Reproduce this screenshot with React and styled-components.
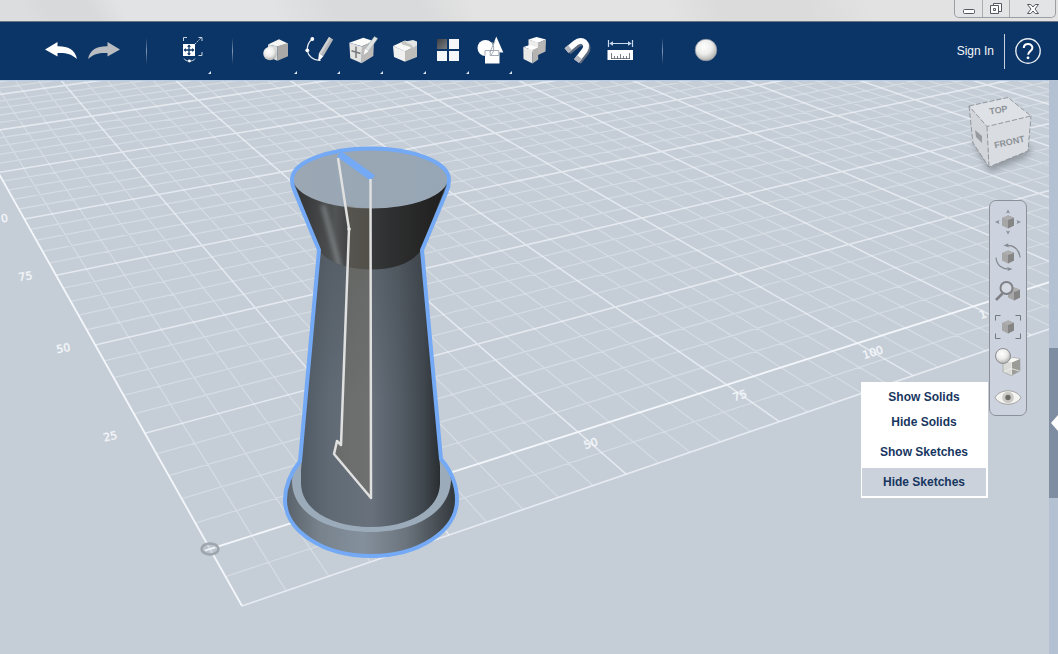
import React from "react";
import styled, { createGlobalStyle, css } from "styled-components";

const GlobalStyle = createGlobalStyle`
  *, *::before, *::after { box-sizing: border-box; }
  body {
    margin: 0;
    background: #c5cdd6;
    font-family: "Liberation Sans", Arial, sans-serif;
    font-size: 12px;
  }
  button { font: inherit; }
`;

const App = styled.div`
  display: flex;
  flex-direction: column;
  min-height: 100vh;
`;

/* ---------- window frame ---------- */

const TitleBar = styled.header`
  display: flex;
  justify-content: flex-end;
  height: 22px;
  padding-right: 2px;
  border-bottom: 1px solid #6b7480;
  background: linear-gradient(62deg, #dcddde 0 3%, #d8d9da 5% 9%, #e2e3e4 12% 26%, #d9dadb 32% 40%, #e3e3e3 45% 63%, #dbdbdc 68% 76%, #e2e2e3 82%);
`;

const WindowControls = styled.div`
  display: flex;
  height: 18px;
  border: 1px solid #9b9ea3;
  border-top: 0;
  border-radius: 0 0 5px 5px;
  background: #e3e4e6;
`;

const WindowButton = styled.button`
  display: flex;
  align-items: center;
  justify-content: center;
  width: ${(p) => (p.$wide ? 46 : 27)}px;
  padding: 0;
  border: 0;
  background: none;

  & + & { border-left: 1px solid #a9acb0; }
`;

/* ---------- main toolbar ---------- */

const Toolbar = styled.nav`
  display: flex;
  align-items: stretch;
  height: 58px;
  padding: 0 17px 0 40px;
  background: #0c3567;
`;

const ToolButton = styled.button`
  position: relative;
  width: 43px;
  padding: 0;
  border: 0;
  background: none;
  cursor: pointer;

  svg { display: block; }

  ${(p) =>
    p.$flyout &&
    css`
      &::after {
        content: "";
        position: absolute;
        right: 1px;
        bottom: 6px;
        border-left: 3px solid transparent;
        border-bottom: 3px solid #dfe6f0;
      }
    `}
`;

const ToolDivider = styled.div`
  width: 1px;
  height: 26px;
  margin: auto 22px auto 20px;
  background: linear-gradient(#0c3567, #8196b3 50%, #0c3567);
`;

const Account = styled.div`
  display: flex;
  align-items: center;
  margin-left: auto;
`;

const SignIn = styled.a`
  padding-right: 10px;
  color: #f2f5fa;
  font-size: 12px;
  line-height: 35px;
  text-decoration: none;
  border-right: 1px solid #c6d2e2;
`;

const HelpButton = styled.button`
  width: 26px;
  height: 26px;
  margin-left: 10px;
  padding: 0;
  border: 0;
  background: none;
  svg { display: block; }
`;

/* ---------- workspace ---------- */

const Workspace = styled.main`
  display: flex;
  flex: 1;
`;

const Viewport = styled.section`
  position: relative;
  flex: 1;
  min-width: 0;
  overflow: hidden;
  background: #c5cdd6;
`;

const SceneDrawing = styled.svg`
  position: absolute;
  inset: 0;
  width: 100%;
  height: 100%;
`;

const ViewCube = styled.button`
  position: absolute;
  top: 8px;
  right: 8px;
  width: 80px;
  height: 88px;
  padding: 0;
  border: 0;
  background: none;
  svg { display: block; }
`;

const NavPanel = styled.div`
  position: absolute;
  top: 120px;
  right: 22px;
  display: flex;
  flex-direction: column;
  padding: 3px 0 1px;
  border: 1px solid #8c9098;
  border-radius: 7px;
  background: #ccd2de;
`;

const NavButton = styled.button`
  width: 36px;
  height: 35px;
  padding: 0;
  border: 0;
  background: none;
  svg { display: block; }
`;

const Menu = styled.div`
  position: absolute;
  top: 302px;
  right: 61px;
  display: flex;
  flex-direction: column;
  width: 127px;
  padding: 2px 2px 2px 1px;
  background: #fff;
`;

const MenuItem = styled.button`
  height: ${(p) => (p.$dense ? 25 : 28)}px;
  margin-top: ${(p) => (p.$dense ? 0 : 2)}px;
  padding: 0;
  border: 0;
  background: ${(p) => (p.$active ? "#ccd2dc" : "none")};
  color: #17365f;
  font-size: 12px;
  font-weight: bold;
  text-align: center;
`;

const MenuGap = styled.div`
  height: 2px;
`;

const Rail = styled.aside`
  width: 9px;
  background: #b3c1d3;
`;

const RailHandle = styled.button`
  display: flex;
  align-items: center;
  justify-content: flex-end;
  width: 100%;
  height: 150px;
  margin-top: 268px;
  padding: 0;
  border: 0;
  background: #7e8da1;
`;

/* ---------- toolbar icons ---------- */

const ToolIcon = ({ children }) => (
  <svg width="43" height="58" viewBox="0 0 43 58" aria-hidden="true">
    {children}
  </svg>
);

const UndoIcon = () => (
  <ToolIcon>
    <path d="M5 27.500 17.500 20v4.300C27 24 35 27 37 37c-6-5.500-12-6.500-19.500-6v3.500Z" fill="#fff" />
  </ToolIcon>
);

const RedoIcon = () => (
  <ToolIcon>
    <path d="M37 27.500 24.500 20v4.300C15 24 7 27 5 37c6-5.500 12-6.500 19.500-6v3.500Z" fill="#b9bcc1" />
  </ToolIcon>
);

const TransformIcon = () => (
  <ToolIcon>
    <rect x="14" y="22" width="12" height="12" fill="#fff" />
    <path d="M20 23.500v9M15.500 28h9" stroke="#0c3567" strokeWidth="1.300" />
    <path d="m20 22.600 2 2.200h-4Zm0 10.800 2-2.200h-4ZM14.600 28l2.200-2v4Zm10.800 0-2.200-2v4Z" fill="#0c3567" />
    <path d="M14.500 19v-3.500H18M29.500 15.500h3.500V19M33 30v3.500h-3.500" fill="none" stroke="#c9d3e1" />
    <path d="m26 22 6-6" stroke="#c9d3e1" strokeDasharray="1.500 1" />
    <path d="M15 36.500c1.500 3.500 9.500 3.500 11 0" fill="none" stroke="#c9d3e1" />
    <circle cx="20.400" cy="39" r="1.400" fill="#fff" />
  </ToolIcon>
);

const PrimitivesIcon = () => (
  <ToolIcon>
    <path d="M24 17.300 33 21.500 22.500 24.500 13 22.500Z" fill="#f5f5f4" />
    <path d="m13 22.500 9.500 2V38.700L13 35Z" fill="#dcdcdb" />
    <path d="M33 21v13.300L22.500 38.700V24.300Z" fill="#aaa9a7" />
    <circle cx="15" cy="31.500" r="6.800" fill="url(#ball)" />
  </ToolIcon>
);

const SketchIcon = () => (
  <ToolIcon>
    <path d="M14.300 17C10.500 20 9 24 9.300 28.500 10 33.500 15 39 22.500 38.300" fill="none" stroke="#e8edf4" strokeWidth="1.200" />
    <circle cx="14.300" cy="17" r="1.900" fill="#fff" />
    <circle cx="9.300" cy="28.300" r="1.900" fill="#fff" />
    <path d="m31 15 4.200 2.400L25.500 34l-4.600-2.500Z" fill="#b5b6b8" />
    <path d="m31 15 1.800 1L23 32.700l-2.100-1.200Z" fill="#d0d1d2" />
    <path d="m20.900 31.500 4.600 2.500-4 4.600-1.300-.8Z" fill="#fff" />
  </ToolIcon>
);

const ConstructIcon = () => (
  <ToolIcon>
    <path d="m22.300 15.700 10.700 3.600-12 5-12.700-3.600Z" fill="#fbfbfa" />
    <path d="m8.300 20.700 12.700 3.800-.3 16.800-11.400-5Z" fill="#e3e3e2" />
    <path d="m33 19.300-.7 14.700-11.600 7.300.3-17Z" fill="#bcbbb9" />
    <path d="M15 24.500v11.500M10.500 28.800l9 2.700" stroke="#77797c" strokeWidth="1.500" />
    <path d="m33.500 14.500 3.200 2.100-9 12.500-3.700-2.300Z" fill="#dfe4e3" stroke="#8e9b9c" strokeWidth=".5" />
    <path d="m24 26.800 3.700 2.300-4.900 3.600Z" fill="#fff" />
  </ToolIcon>
);

const ModifyIcon = () => (
  <ToolIcon>
    <path d="m21 18.500 12 5-12 6-12-5.500Z" fill="#f8f8f7" />
    <path d="M9 24l12 5.300v10.500L10 35Z" fill="#f1f1f0" />
    <path d="M33 23.500V35l-12 4.800V29.300Z" fill="#bfbebb" />
    <path d="M16.500 20.500c2 4.500 9 2 11 6L33 23.500v-4l-4-1.500Z" fill="#e6e6e4" />
    <path d="M17 20.300c2 4.700 8.500 2.200 10.500 6.200l1.500-.8c-1-5-7-3.500-7.500-7Z" fill="#c4c4c2" />
  </ToolIcon>
);

const PatternIcon = () => (
  <ToolIcon>
    <rect x="10" y="17" width="10" height="10" fill="url(#tile)" />
    <path d="M22 17h10v10H22ZM10 29h10v10H10ZM22 29h10v10H22Z" fill="#f5f7f8" />
  </ToolIcon>
);

const GroupingIcon = () => (
  <ToolIcon>
    <circle cx="15.500" cy="26" r="8" fill="#fff" />
    <path d="M26.300 14.500 33.300 30.500 20 30Z" fill="#fff" />
    <rect x="15" y="28.500" width="14.500" height="13" fill="#fff" />
    <path d="M20.200 30v-1.500h8.600v5h-8.600ZM15 33.500v-5h6M22 20c2.500 5 2.300 9.500-1 13M25 19l-5 11" fill="none" stroke="#9aa2ad" strokeWidth=".9" />
  </ToolIcon>
);

const CombineIcon = () => (
  <ToolIcon>
    <path d="m15.500 17.500 8-2.500 9.500 2.500-8 3.500Z" fill="#fff" />
    <path d="m15.500 17.500 9.500 3v12l-9.500-4Z" fill="#ececeb" />
    <path d="m33 17.500-.5 12L25 33V21Z" fill="#b9b8b6" />
    <path d="m10.300 25 6.700-2 8 2.500-5.500 2.500Z" fill="#fff" />
    <path d="m10.300 25 9.200 3v13.500l-9-4.500Z" fill="#e9e9e8" />
    <path d="m25 25.500.2 12-5.700 4V28Z" fill="#b4b3b1" />
  </ToolIcon>
);

const SnapIcon = () => (
  <ToolIcon>
    <g fill="none" strokeWidth="6">
      <path d="m11.500 29 8.500-7c7-5.500 13.500 1 9 7.500L21.500 39" stroke="#5f6c80" transform="translate(1 1)" />
      <path d="m10.500 28.500 9-7.500c7-5.500 13.500 1 9 7.500L20.500 39" stroke="#fff" />
      <path d="m10.500 28.500 3.500-2.900M20.500 39l3-3.900" stroke="#b3b6bd" />
    </g>
  </ToolIcon>
);

const MeasureIcon = () => (
  <ToolIcon>
    <path d="M9.500 18v7M33.500 18v7M11 21.500h21" stroke="#c8dcee" strokeWidth="1.200" />
    <path d="m10.200 21.500 3.800-2.300v4.600Zm22.600 0L29 19.200v4.600Z" fill="#c8dcee" />
    <rect x="8.500" y="28" width="25.500" height="10" fill="#fff" />
    <path d="M12.500 31v6M15.500 34v3M18.500 34v3M21.500 32v5M24.500 34v3M27.500 34v3M30.500 31v6M12 36.500h19" stroke="#5b6068" strokeWidth=".8" />
  </ToolIcon>
);

const MaterialIcon = () => (
  <ToolIcon>
    <circle cx="21" cy="28" r="10.800" fill="url(#ball)" stroke="#8992a0" strokeWidth=".7" />
  </ToolIcon>
);

/* ---------- navigation icons ---------- */

const NavIcon = ({ children }) => (
  <svg width="36" height="35" viewBox="0 0 36 35" aria-hidden="true">
    {children}
  </svg>
);

const Hex = ({ x = 18, y = 18 }) => (
  <g transform={`translate(${x} ${y})`}>
    <path d="M0-6.500 6-4V3.500L0 6.500-6 3.500V-4Z" fill="#a6a6a7" />
    <path d="M0-6.500 6-4V3.500L0 6.500Z" fill="#858586" />
    <path d="M-6-4 0-6.500 6-4 0-2Z" fill="#aeaeaf" />
  </g>
);

const PanIcon = () => (
  <NavIcon>
    <Hex />
    <path d="m18 5.500 2 4-2-1-2 1Zm0 25 2-4-2 1-2-1ZM5 18l4.500-2-1 2 1 2Zm26 0-4.500-2 1 2-1 2Z" fill="#898c92" />
  </NavIcon>
);

const OrbitIcon = () => (
  <NavIcon>
    <Hex />
    <path d="M17 6.500c7-.5 12.500 4.500 13 12M19.500 30C12 30.500 6.500 26 6 18.500" fill="none" stroke="#85888e" strokeWidth="1.200" />
    <path d="m13.500 6.500 5-2.200-1 2.300 2 1.900Zm9 23.500-5 2 1-2.300-2-1.900Z" fill="#85888e" />
  </NavIcon>
);

const ZoomIcon = () => (
  <NavIcon>
    <Hex x={24} y={20} />
    <path d="M12.500 19.500 6 26" stroke="#7f8186" strokeWidth="2.600" />
    <circle cx="16.500" cy="14" r="6" fill="#d5dae3" stroke="#7f8186" strokeWidth="2" />
  </NavIcon>
);

const FitIcon = () => (
  <NavIcon>
    <Hex />
    <path d="M5.500 11.500v-5h5M25.500 6.500h5v5M30.500 24.500v5h-5M10.500 29.500h-5v-5" fill="none" stroke="#75787d" />
  </NavIcon>
);

const DisplayIcon = () => (
  <NavIcon>
    <path d="m13 17 11-3.500L30 15v12l-9 4.500-8-3.500Z" fill="#d9dbd8" stroke="#9b9d9b" strokeWidth=".6" />
    <path d="m21.500 18.500 8.500-3.500v12l-8.500 4.500Z" fill="#9b9c98" />
    <path d="m14 17.500 7.500 1 8-3.500-7-1Z" fill="#f7f7f4" />
    <path d="m14 28 7-3.500 8.500 2.500M21.500 18.500v12.500" fill="none" stroke="#f1f1ee" strokeWidth=".8" />
    <circle cx="13" cy="12" r="7.500" fill="url(#ball)" stroke="#8b8d90" />
  </NavIcon>
);

const EyeIcon = () => (
  <NavIcon>
    <path d="M5 18.500C10 9.500 26 9.500 31 18.500 26 27.500 10 27.500 5 18.500Z" fill="#f3f3f1" stroke="#9b9b99" strokeWidth=".9" />
    <circle cx="18" cy="18.500" r="5.800" fill="#cbcac4" />
    <circle cx="18" cy="18.500" r="2.700" fill="#6d6c69" />
  </NavIcon>
);

/* ---------- scene ---------- */

/* Projects a point of the ground plane (millimetres) on to the view. */
const project = (u, v) => {
  const w = 1 + 0.00317 * u + 0.006197 * v;
  const x = (210 + 9.192 * u - 1.705 * v) / w;
  const y = (549 - 0.97 * u - 1.943 * v) / w;
  return `${x.toFixed(2)} ${y.toFixed(2)}`;
};

const U_MAX = 500;
const V_MIN = -10;
const V_MAX = 400;

const gridPath = (major) => {
  let d = "";
  for (let u = 5; u <= U_MAX; u += 5) {
    if ((u % 25 === 0) === major) d += `M${project(u, V_MIN)}L${project(u, V_MAX)}`;
  }
  for (let v = V_MIN + 5; v <= V_MAX; v += 5) {
    if (v !== 0 && (v % 25 === 0) === major) d += `M${project(0, v)}L${project(U_MAX, v)}`;
  }
  return d;
};

const minorLines = gridPath(false);
const majorLines = gridPath(true);

const AxisLabel = styled.text`
  font-family: "DejaVu Sans", sans-serif;
  font-size: 11px;
  fill: #f4f7fb;
  stroke: #f4f7fb;
  stroke-opacity: 0.4;
  text-anchor: middle;
`;

const axisLabels = [
  { x: 5, y: 222, turn: -8, text: "0" },
  { x: 26, y: 280, turn: -8, text: "75" },
  { x: 64, y: 352, turn: -10, text: "50" },
  { x: 111, y: 440, turn: -12, text: "25" },
  { x: 592, y: 447, turn: -18, text: "50" },
  { x: 741, y: 399, turn: -18, text: "75" },
  { x: 874, y: 356, turn: -18, text: "100" },
  { x: 984, y: 318, turn: -18, text: "1" },
];

const outline =
  "M292 180A78.500 31.500 0 0 1 449 180Q449 187 446 193L422 250L441 459C452 472 457 486 457 500A86 56 0 0 1 285 500C285 487 290 474 300 461L319 250L295 192Q292 186 292 180Z";

const Scene = () => (
  <SceneDrawing viewBox="0 80 1049 574" preserveAspectRatio="xMinYMin slice" role="img" aria-label="Rook model on the work plane">
    <defs>
      <linearGradient id="cap" x1="294" x2="448" y1="0" y2="0" gradientUnits="userSpaceOnUse">
        <stop offset="0" stopColor="#303133" />
        <stop offset=".18" stopColor="#454748" />
        <stop offset=".27" stopColor="#515455" />
        <stop offset=".36" stopColor="#404143" />
        <stop offset=".6" stopColor="#303132" />
        <stop offset=".85" stopColor="#252525" />
        <stop offset="1" stopColor="#1e1e1e" />
      </linearGradient>
      <linearGradient id="body" x1="302" x2="440" y1="0" y2="0" gradientUnits="userSpaceOnUse">
        <stop offset="0" stopColor="#515b65" />
        <stop offset=".2" stopColor="#606a74" />
        <stop offset=".5" stopColor="#68717c" />
        <stop offset=".7" stopColor="#555e67" />
        <stop offset=".88" stopColor="#40474e" />
        <stop offset="1" stopColor="#292e32" />
      </linearGradient>
      <linearGradient id="bodyShade" x1="0" x2="0" y1="250" y2="400" gradientUnits="userSpaceOnUse">
        <stop offset="0" stopColor="#3b4045" stopOpacity=".3" />
        <stop offset="1" stopColor="#3b4045" stopOpacity="0" />
      </linearGradient>
      <linearGradient id="base" x1="285" x2="457" y1="0" y2="0" gradientUnits="userSpaceOnUse">
        <stop offset="0" stopColor="#596169" />
        <stop offset=".2" stopColor="#77828c" />
        <stop offset=".45" stopColor="#84909c" />
        <stop offset=".7" stopColor="#6c757e" />
        <stop offset="1" stopColor="#31363a" />
      </linearGradient>
      <linearGradient id="top" x1="0" x2="1" y1="0" y2="0">
        <stop offset="0" stopColor="#9ba7b3" />
        <stop offset="1" stopColor="#97a6b5" />
      </linearGradient>
      <radialGradient id="ball" cx=".42" cy=".35" r=".65">
        <stop offset="0" stopColor="#fff" />
        <stop offset=".55" stopColor="#ececeb" />
        <stop offset="1" stopColor="#b0b0ae" />
      </radialGradient>
      <linearGradient id="tile" x1="0" x2="1" y1="0" y2="1">
        <stop offset="0" stopColor="#3c3f43" />
        <stop offset="1" stopColor="#7b7e81" />
      </linearGradient>
      <filter id="glint" x="-100%" y="-20%" width="300%" height="140%">
        <feGaussianBlur stdDeviation="2" />
      </filter>
      <clipPath id="capShape">
        <path d="M294 182 319 250C328 263 348 269.500 371 269.500C395 269.500 412 263 421 250L447 182Z" />
      </clipPath>
    </defs>

    <g fill="none" stroke="#f4f8fc">
      <path d={minorLines} strokeOpacity=".34" strokeWidth="1.300" />
      <path d={majorLines} strokeOpacity=".64" strokeWidth="1.600" />
      <path d={`M${project(0, V_MIN)}L${project(U_MAX, V_MIN)}`} strokeOpacity=".7" strokeWidth="1.700" />
      <path d={`M${project(0, V_MIN)}L${project(0, V_MAX)}M${project(0, 0)}L${project(U_MAX, 0)}`} strokeOpacity=".95" strokeWidth="1.900" />
    </g>
    <path d="M0 80.500H1049" stroke="#b5cbe3" />

    {axisLabels.map((l) => (
      <AxisLabel key={`${l.x}-${l.text}`} x={l.x} y={l.y} transform={`rotate(${l.turn} ${l.x} ${l.y})`}>
        {l.text}
      </AxisLabel>
    ))}

    <ellipse cx="210" cy="549" rx="8.500" ry="5.500" fill="#b4bac1" fillOpacity=".5" stroke="#9aa1a8" strokeWidth="2.500" strokeOpacity=".9" />
    <path d="m205 550.500 10-3" stroke="#f4f8fc" strokeWidth="1.800" />

    <path d={outline} fill="url(#base)" />
    <path d="M302 459C295 465 292 474 292 482C293 514 328 532 371 532C414 532 450 513 451 480C450 472 446 464 440 457Z" fill="#9cabb9" />
    <path d="M319 250 301 470V484C302 511 333 527 371 527C409 527 439 510 440 484V466L422 250Z" fill="url(#body)" />
    <path d="M319 250 306 400H435L422 250Z" fill="url(#bodyShade)" />
    <path d="M294 182 319 250C328 263 348 269.500 371 269.500C395 269.500 412 263 421 250L447 182Z" fill="url(#cap)" />
    <g clipPath="url(#capShape)">
      <path d="M323 205 341 272" stroke="#8b8f92" strokeWidth="4" strokeOpacity=".8" filter="url(#glint)" />
    </g>
    <ellipse cx="370.500" cy="178.500" rx="77.500" ry="30" fill="url(#top)" />
    <path d={outline} fill="none" stroke="#73a9f5" strokeWidth="4" strokeLinejoin="round" />

    <path d="M349 229 341 445 337 441 334 454 371 498 370.500 208.500Q356 208 345 205Z" fill="#77705f" fillOpacity=".42" />
    <path d="M342 156 370 176" stroke="#73a9f5" strokeWidth="7" strokeLinecap="square" />
    <path d="M338 158 349 229 341 445 337 441 334 454 371 498 370.500 179" fill="none" stroke="#dfe0df" strokeWidth="2.500" strokeLinejoin="round" />
    <circle cx="349" cy="229" r="1.800" fill="#e4e5e5" />
  </SceneDrawing>
);

const CubeLabel = styled.text`
  font-family: "Liberation Sans", Arial, sans-serif;
  font-size: 9px;
  font-weight: bold;
  fill: #8d9298;
  text-anchor: middle;
`;

const CubeDrawing = () => (
  <svg width="80" height="88" viewBox="0 0 80 88" aria-hidden="true">
    <defs>
      <filter id="soft" x="-30%" y="-60%" width="160%" height="220%">
        <feGaussianBlur stdDeviation="3" />
      </filter>
    </defs>
    <path d="m11 54 18 30 37-15 6-10Z" fill="#858c94" fillOpacity=".8" filter="url(#soft)" />
    <path d="M8 18 47 9.500 70 28 26 38.500Z" fill="#dee1e5" />
    <path d="M8 18 26 38.500 28 79 12 55Z" fill="#d2d5d9" />
    <path d="M26 38.500 70 28 67 63 28 79Z" fill="#d9dce0" />
    <path d="M8 18 47 9.500 70 28 26 38.500ZM8 18 12 55 28 79 67 63 70 28M26 38.500 28 79" fill="none" stroke="#8b9096" strokeWidth=".9" strokeDasharray="5 2" />
    <path d="m14 42 7 6v7l-6-6Z" fill="#969ba0" />
    <CubeLabel x="38" y="25" transform="rotate(-10 38 25)">TOP</CubeLabel>
    <CubeLabel x="49" y="57" transform="rotate(-13 49 57)">FRONT</CubeLabel>
  </svg>
);

const tools = [
  { label: "Undo", Icon: UndoIcon },
  { label: "Redo", Icon: RedoIcon },
  null,
  { label: "Transform", Icon: TransformIcon, flyout: true },
  null,
  { label: "Primitives", Icon: PrimitivesIcon, flyout: true },
  { label: "Sketch", Icon: SketchIcon, flyout: true },
  { label: "Construct", Icon: ConstructIcon, flyout: true },
  { label: "Modify", Icon: ModifyIcon, flyout: true },
  { label: "Pattern", Icon: PatternIcon, flyout: true },
  { label: "Grouping", Icon: GroupingIcon, flyout: true },
  { label: "Combine", Icon: CombineIcon },
  { label: "Snap", Icon: SnapIcon },
  { label: "Measure", Icon: MeasureIcon },
  null,
  { label: "Material", Icon: MaterialIcon },
];

const navTools = [
  { label: "Pan", Icon: PanIcon },
  { label: "Orbit", Icon: OrbitIcon },
  { label: "Zoom", Icon: ZoomIcon },
  { label: "Fit", Icon: FitIcon },
  { label: "Display style", Icon: DisplayIcon },
  { label: "Visibility", Icon: EyeIcon },
];

export default function Designer() {
  return (
    <App>
      <GlobalStyle />
      <TitleBar>
        <WindowControls>
          <WindowButton aria-label="Minimize">
            <svg width="14" height="14" viewBox="0 0 14 14">
              <rect x="1.500" y="7.500" width="11" height="4" rx="1" fill="#fff" stroke="#555963" />
            </svg>
          </WindowButton>
          <WindowButton aria-label="Restore">
            <svg width="14" height="14" viewBox="0 0 14 14">
              <path d="M4.500 1.500h8v8h-8Z" fill="#fff" stroke="#555963" />
              <path d="M1.500 3.500h8v8h-8Z" fill="#fff" stroke="#555963" />
              <path d="M4.500 6.500h2v2h-2Z" fill="#fff" stroke="#555963" />
            </svg>
          </WindowButton>
          <WindowButton $wide aria-label="Close">
            <svg width="14" height="14" viewBox="0 0 14 14">
              <path d="M1.500 2.500h3.300L7 5l2.200-2.500h3.300L9 7l3.500 4.500H9.200L7 9l-2.200 2.500H1.500L5 7Z" fill="#fff" stroke="#555963" />
            </svg>
          </WindowButton>
        </WindowControls>
      </TitleBar>

      <Toolbar>
        {tools.map((t, i) =>
          t ? (
            <ToolButton key={t.label} aria-label={t.label} $flyout={t.flyout}>
              <t.Icon />
            </ToolButton>
          ) : (
            <ToolDivider key={i} />
          )
        )}
        <Account>
          <SignIn href="#sign-in">Sign In</SignIn>
          <HelpButton aria-label="Help">
            <svg width="26" height="26" viewBox="0 0 26 26">
              <circle cx="13" cy="13" r="12.200" fill="none" stroke="#e9eef5" strokeWidth="1.400" />
              <path d="M8.800 10c0-5.300 8.600-5.300 8.600-.2 0 3.400-4.300 3.300-4.300 7" fill="none" stroke="#fff" strokeWidth="2" />
              <circle cx="13" cy="19.800" r="1.400" fill="#fff" />
            </svg>
          </HelpButton>
        </Account>
      </Toolbar>

      <Workspace>
        <Viewport>
          <Scene />
          <ViewCube aria-label="View cube">
            <CubeDrawing />
          </ViewCube>
          <NavPanel>
            {navTools.map(({ label, Icon }) => (
              <NavButton key={label} aria-label={label}>
                <Icon />
              </NavButton>
            ))}
          </NavPanel>
          <Menu role="menu">
            <MenuItem role="menuitem" $dense>Show Solids</MenuItem>
            <MenuItem role="menuitem" $dense>Hide Solids</MenuItem>
            <MenuGap />
            <MenuItem role="menuitem">Show Sketches</MenuItem>
            <MenuItem role="menuitem" $active>Hide Sketches</MenuItem>
          </Menu>
        </Viewport>
        <Rail>
          <RailHandle aria-label="Open side panel">
            <svg width="8" height="16" viewBox="0 0 8 16">
              <path d="M8 0v16L1 8Z" fill="#fff" />
            </svg>
          </RailHandle>
        </Rail>
      </Workspace>
    </App>
  );
}
